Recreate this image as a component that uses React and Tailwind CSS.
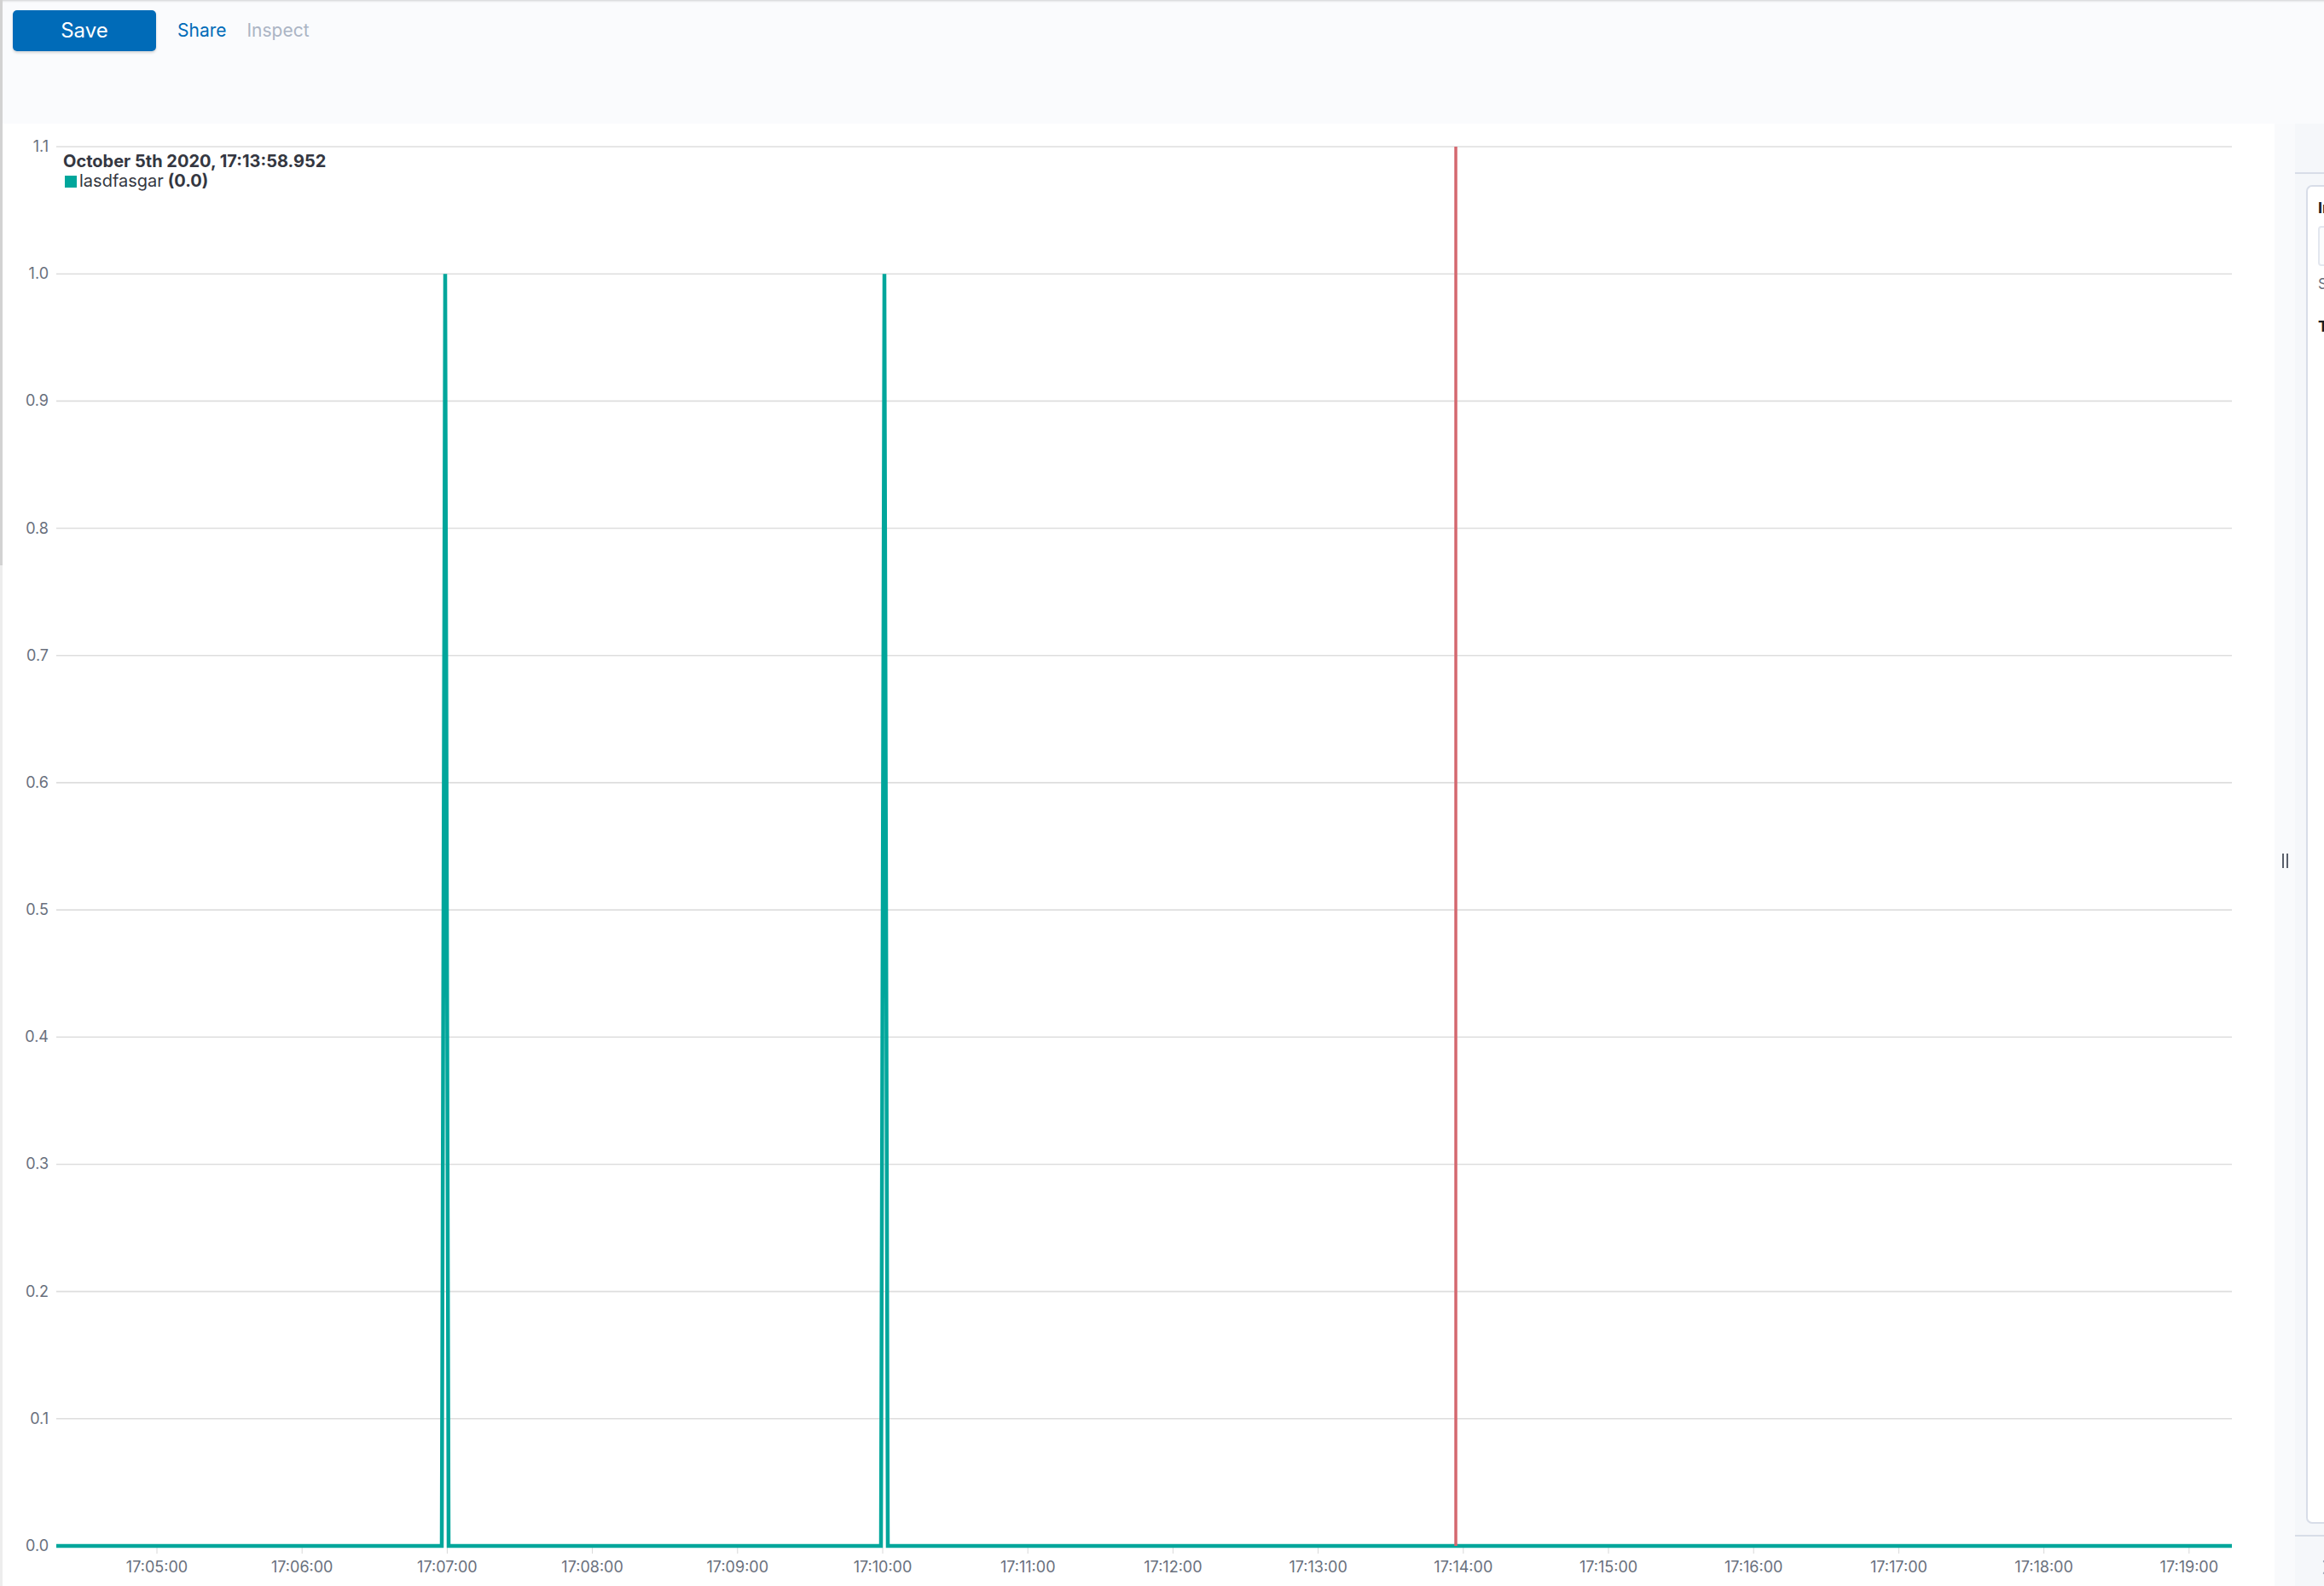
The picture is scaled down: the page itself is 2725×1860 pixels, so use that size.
import { X } from "lucide-react";

const FONT = { fontFamily: "Inter, 'Noto Sans', sans-serif" };

// page coords: chart svg uses viewBox offset so numbers below are screen pixels
const Y0 = 1813;
const STEP = 149.18;
const yOf = (v) => Y0 - v * 10 * STEP;
const xOfMin = (m) => 184 + (m - 5) * 170.2;

const yTicks = [0, 0.1, 0.2, 0.3, 0.4, 0.5, 0.6, 0.7, 0.8, 0.9, 1.0, 1.1];
const xTicks = [5, 6, 7, 8, 9, 10, 11, 12, 13, 14, 15, 16, 17, 18, 19];

const seriesPoints = [
  [66, Y0],
  [518, Y0],
  [522, yOf(1)],
  [526, Y0],
  [1033, Y0],
  [1037, yOf(1)],
  [1041, Y0],
  [2617, Y0],
];

const Chart = () => (
  <div className="relative w-[2664px] h-full bg-white">
    <svg width="2664" height="1715" viewBox="3 145 2664 1715" className="block">
      {yTicks.map((v) => (
        <g key={v}>
          {v > 0 && (
            <line x1="66" x2="2617" y1={yOf(v)} y2={yOf(v)} stroke="#dedede" strokeWidth="1.6" />
          )}
          <text
            x="57"
            y={yOf(v) + 6}
            textAnchor="end"
            fontSize="18"
            fill="#69707d"
            fontFamily="Inter, sans-serif"
          >
            {v.toFixed(1)}
          </text>
        </g>
      ))}

      {xTicks.map((m) => (
        <g key={m}>
          <line x1={xOfMin(m)} x2={xOfMin(m)} y1="1815" y2="1822" stroke="#d8d8d8" strokeWidth="1" />
          <text
            x={xOfMin(m)}
            y="1844"
            textAnchor="middle"
            fontSize="18"
            fill="#69707d"
            fontFamily="Inter, sans-serif"
          >
            {`17:${String(m).padStart(2, "0")}:00`}
          </text>
        </g>
      ))}

      <polyline
        points={seriesPoints.map((p) => p.join(",")).join(" ")}
        fill="none"
        stroke="#00a69b"
        strokeWidth="4.5"
        strokeLinejoin="miter"
      />

      {/* cursor */}
      <line x1="1707" x2="1707" y1="172" y2={Y0} stroke="#d4686f" strokeWidth="3.5" />
    </svg>

    {/* legend */}
    <div className="absolute left-[71px] top-[33px] text-[#343741] leading-[23px]">
      <div className="text-[20px] font-bold">October 5th 2020, 17:13:58.952</div>
      <div className="flex items-center text-[20px]">
        <span className="w-[14px] h-[14px] bg-[#00a69b] mr-[3px] ml-[2px]" />
        <span>lasdfasgar</span>
        <span className="font-bold ml-[5px]">(0.0)</span>
      </div>
    </div>
  </div>
);

const SidePanel = () => (
  <div className="flex-1 h-full bg-[#f5f7fa] flex flex-col overflow-hidden">
    <div className="h-[59px] shrink-0 border-b-2 border-[#d8dde8]" />
    <div className="pl-[13px] pt-[13px] shrink-0">
      <div className="h-[1570px] w-[60px] bg-white border-2 border-r-0 border-[#d8dde8] rounded-l-[7px] pl-[12px] pt-[14px] overflow-hidden">
        <div className="text-[18px] font-bold text-[#1a1c21] whitespace-nowrap leading-[22px]">Interval</div>
        <div className="mt-[10px] h-[47px] w-[80px] border-2 border-[#e3e7ef] rounded-[4px] bg-[#fbfcfd]" />
        <div className="mt-[10px] text-[17px] text-[#69707d] whitespace-nowrap leading-[22px]">Set interval</div>
        <div className="mt-[28px] text-[18px] font-bold text-[#1a1c21] whitespace-nowrap leading-[22px]">Timelion expression</div>
      </div>
    </div>
    <div className="mt-[13px] border-t-2 border-[#d8dde8] pl-[27px] pt-[22px]">
      <X size={28} strokeWidth={2} className="text-[#98a2b3]" />
    </div>
  </div>
);

export default function App() {
  return (
    <div className="w-[2725px] h-[1860px] flex overflow-hidden bg-white" style={FONT}>
      {/* scrollbar strip */}
      <div className="w-[3px] h-full flex flex-col shrink-0">
        <div className="h-[663px] bg-[#d2d2d2]" />
        <div className="flex-1 bg-[#ededed]" />
      </div>

      <div className="flex-1 flex flex-col h-full">
        {/* top bar */}
        <div className="h-[145px] shrink-0 bg-[#fafbfd] shadow-[inset_0_3px_3px_-2px_rgba(0,0,0,0.18)] px-[12px] pt-[12px] flex items-start">
          <button className="w-[168px] h-[48px] rounded-[5px] bg-[#006bb8] text-white text-[24px] font-normal shadow-[0_2px_3px_rgba(0,0,0,0.15)]">
            Save
          </button>
          <span className="ml-[25px] mt-[10px] text-[21px] text-[#006bb8] leading-[28px]">Share</span>
          <span className="ml-[24px] mt-[10px] text-[21px] text-[#abb4c4] leading-[28px]">Inspect</span>
        </div>

        <div className="flex-1 flex min-h-0">
          <Chart />
          {/* resize gutter */}
          <div className="w-[24px] h-full bg-[#f9fafc] flex items-center justify-center pt-[14px] shrink-0">
            <div className="flex gap-[3px]">
              <span className="w-[2px] h-[17px] bg-[#5a606b]" />
              <span className="w-[2px] h-[17px] bg-[#5a606b]" />
            </div>
          </div>
          <SidePanel />
        </div>
      </div>
    </div>
  );
}
